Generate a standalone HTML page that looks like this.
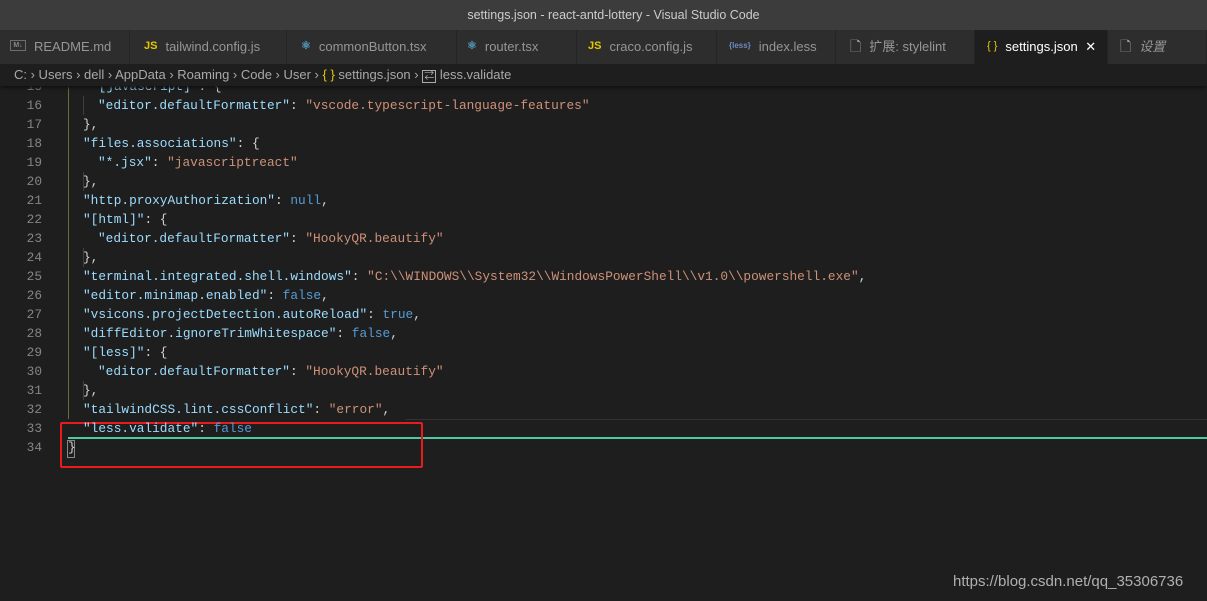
<!DOCTYPE html>
<html><head><meta charset="utf-8"><style>
*{margin:0;padding:0;box-sizing:border-box}
html,body{width:1207px;height:601px;overflow:hidden}
body{background:#1e1e1e;position:relative;font-family:"Liberation Sans","Noto Sans CJK SC",sans-serif}
.title{position:absolute;left:0;top:0;width:1207px;height:30px;background:#3c3c3c;color:#ccc;font-size:12.5px;text-align:center;line-height:30px;padding-left:20px}
.tabs{position:absolute;left:0;top:30px;width:1207px;height:34px;background:#252526;z-index:3}
.tab{position:absolute;top:0;height:34px;background:#2d2d2d;border-right:1px solid #252526;color:#969696;font-size:13px;line-height:34px;padding-left:10px;white-space:nowrap}
.tab.act{background:#1e1e1e;color:#fff}
.ic{display:inline-block;margin-right:8px;font-size:11px;font-weight:bold;line-height:14px;vertical-align:middle;position:relative;top:-2px}
.bc{position:absolute;left:0;top:64px;width:1207px;height:22px;background:#1e1e1e;box-shadow:0 3px 3px -1px #111;z-index:2;color:#a9a9a9;font-size:13px;line-height:22px;padding-left:14px;white-space:nowrap}
.code{position:absolute;left:0;top:77px;font-family:"Liberation Mono",monospace;font-size:12.8px;line-height:19px;white-space:pre;color:#d4d4d4}
.ln{position:absolute;left:0;width:42px;text-align:right;color:#858585}
.tx{position:absolute;left:83px}
.k{color:#9cdcfe}.s{color:#ce9178}.b{color:#569cd6}
.g{position:absolute;width:1px;background:#404040}
</style></head><body>
<div class="title">settings.json - react-antd-lottery - Visual Studio Code</div>
<div class="tabs">
<div class="tab" style="left:0;width:130px"><span class="ic" style="color:#888;border:1px solid #6d6d6d;font-size:7px;width:16px;height:11px;line-height:9px;text-align:center;padding:0">M↓</span>README.md</div>
<div class="tab" style="left:130px;width:157px;padding-left:14px"><span class="ic" style="color:#e5c800">JS</span>tailwind.config.js</div>
<div class="tab" style="left:287px;width:170px;padding-left:14px"><span class="ic" style="color:#519aba">⚛</span>commonButton.tsx</div>
<div class="tab" style="left:457px;width:120px;padding-left:10px"><span class="ic" style="color:#519aba">⚛</span>router.tsx</div>
<div class="tab" style="left:577px;width:140px;padding-left:11px"><span class="ic" style="color:#e5c800">JS</span>craco.config.js</div>
<div class="tab" style="left:717px;width:119px;padding-left:12px"><span class="ic" style="color:#6d8abf;font-size:8px">{less}</span>index.less</div>
<div class="tab" style="left:836px;width:139px;padding-left:14px"><span class="ic" style="color:#aaa;font-weight:normal;font-size:14px">🗋</span>扩展: stylelint</div>
<div class="tab act" style="left:975px;width:133px;padding-left:12px"><span class="ic" style="color:#e5c800;font-weight:normal">{ }</span>settings.json <span style="margin-left:4px">✕</span></div>
<div class="tab" style="left:1108px;width:99px;padding-left:12px"><span class="ic" style="color:#aaa;font-weight:normal;font-size:14px">🗋</span><i>设置</i></div>
</div>
<div class="bc">C: › Users › dell › AppData › Roaming › Code › User › <span style="color:#e5c800">{ }</span> settings.json › <span style="font-size:10px;border:1px solid #aaa;padding:0 1px">⇄</span> less.validate</div>
<div class="code">
<div class="g" style="left:68px;top:0;height:342px;background:#6b6b3a"></div>
<div class="g" style="left:83px;top:19px;height:19px"></div>
<div class="g" style="left:83px;top:95px;height:19px"></div>
<div class="g" style="left:83px;top:171px;height:19px"></div>
<div class="g" style="left:83px;top:304px;height:19px"></div>
<div style="position:absolute;left:406px;top:342px;width:801px;height:1px;background:#333"></div>
<div style="position:absolute;left:68px;top:360px;width:1139px;height:2px;background:#4ec9a4"></div>
<div style="position:absolute;left:67px;top:363px;width:8px;height:18px;border:1px solid #888"></div>
<div style="position:absolute;left:60px;top:345px;width:363px;height:46px;border:2px solid #e81c1c;border-radius:2px"></div>
<div class="ln" style="top:0">15</div><div class="tx" style="top:0;left:91px"><span class="k">"[javascript]"</span>: {</div>
<div class="ln" style="top:19px">16</div><div class="tx" style="top:19px;left:98px"><span class="k">"editor.defaultFormatter"</span>: <span class="s">"vscode.typescript-language-features"</span></div>
<div class="ln" style="top:38px">17</div><div class="tx" style="top:38px">},</div>
<div class="ln" style="top:57px">18</div><div class="tx" style="top:57px"><span class="k">"files.associations"</span>: {</div>
<div class="ln" style="top:76px">19</div><div class="tx" style="top:76px;left:98px"><span class="k">"*.jsx"</span>: <span class="s">"javascriptreact"</span></div>
<div class="ln" style="top:95px">20</div><div class="tx" style="top:95px">},</div>
<div class="ln" style="top:114px">21</div><div class="tx" style="top:114px"><span class="k">"http.proxyAuthorization"</span>: <span class="b">null</span>,</div>
<div class="ln" style="top:133px">22</div><div class="tx" style="top:133px"><span class="k">"[html]"</span>: {</div>
<div class="ln" style="top:152px">23</div><div class="tx" style="top:152px;left:98px"><span class="k">"editor.defaultFormatter"</span>: <span class="s">"HookyQR.beautify"</span></div>
<div class="ln" style="top:171px">24</div><div class="tx" style="top:171px">},</div>
<div class="ln" style="top:190px">25</div><div class="tx" style="top:190px"><span class="k">"terminal.integrated.shell.windows"</span>: <span class="s">"C:\\WINDOWS\\System32\\WindowsPowerShell\\v1.0\\powershell.exe"</span>,</div>
<div class="ln" style="top:209px">26</div><div class="tx" style="top:209px"><span class="k">"editor.minimap.enabled"</span>: <span class="b">false</span>,</div>
<div class="ln" style="top:228px">27</div><div class="tx" style="top:228px"><span class="k">"vsicons.projectDetection.autoReload"</span>: <span class="b">true</span>,</div>
<div class="ln" style="top:247px">28</div><div class="tx" style="top:247px"><span class="k">"diffEditor.ignoreTrimWhitespace"</span>: <span class="b">false</span>,</div>
<div class="ln" style="top:266px">29</div><div class="tx" style="top:266px"><span class="k">"[less]"</span>: {</div>
<div class="ln" style="top:285px">30</div><div class="tx" style="top:285px;left:98px"><span class="k">"editor.defaultFormatter"</span>: <span class="s">"HookyQR.beautify"</span></div>
<div class="ln" style="top:304px">31</div><div class="tx" style="top:304px">},</div>
<div class="ln" style="top:323px">32</div><div class="tx" style="top:323px"><span class="k">"tailwindCSS.lint.cssConflict"</span>: <span class="s">"error"</span>,</div>
<div class="ln" style="top:342px">33</div><div class="tx" style="top:342px"><span class="k">"less.validate"</span>: <span class="b">false</span></div>
<div class="ln" style="top:361px">34</div><div class="tx" style="top:361px;left:68px">}</div>
</div>
<div style="position:absolute;left:953px;top:573px;color:#b0b0b0;font-size:15px">https://blog.csdn.net/qq_35306736</div>
</body></html>
